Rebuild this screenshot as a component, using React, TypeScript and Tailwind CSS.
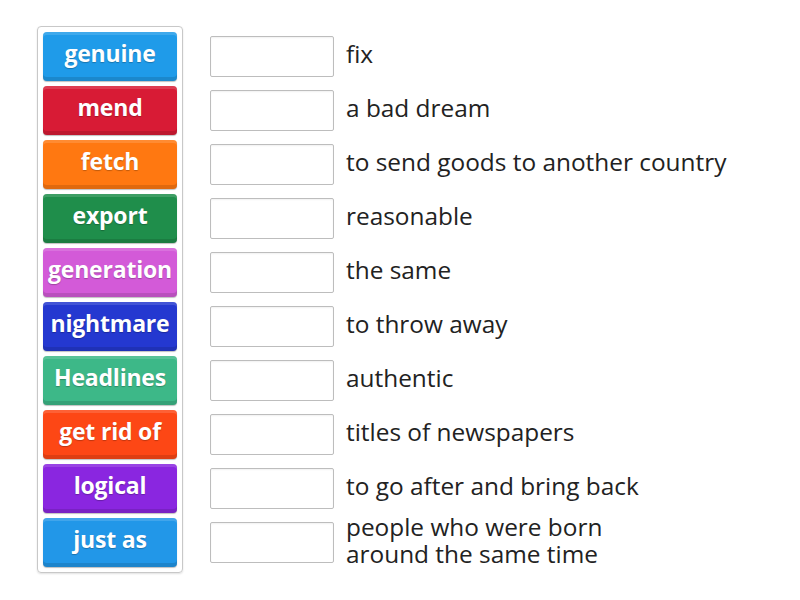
const tiles = [
    { word: "genuine", cls: "bg-[#1f9be9]" },
    { word: "mend", cls: "bg-[#d81b35]" },
    { word: "fetch", cls: "bg-[#ff7811]" },
    { word: "export", cls: "bg-[#1f8e4b]" },
    { word: "generation", cls: "bg-[#d35ad8]" },
    { word: "nightmare", cls: "bg-[#2438d0]" },
    { word: "Headlines", cls: "bg-[#3db888]" },
    { word: "get rid of", cls: "bg-[#fd4715]" },
    { word: "logical", cls: "bg-[#8a26e0]" },
    { word: "just as", cls: "bg-[#2297e8]" },
];

const definitions = [
    ["fix"],
    ["a bad dream"],
    ["to send goods to another country"],
    ["reasonable"],
    ["the same"],
    ["to throw away"],
    ["authentic"],
    ["titles of newspapers"],
    ["to go after and bring back"],
    ["people who were born", "around the same time"],
];

const App = () => {
    return (
        <div className="w-[800px] h-[600px] bg-white flex items-start gap-[27px] pt-[26px] pl-[37px] font-['Open_Sans',sans-serif]">
            <div className="w-[146px] border border-[#c8c8c8] rounded-[4px] p-[5px] flex flex-col gap-[5px] shadow-[0_1px_2px_rgba(0,0,0,0.12)]">
                {tiles.map((t) => (
                    <div
                        key={t.word}
                        className={`${t.cls} h-[49px] rounded-[4px] flex items-center justify-center text-white font-bold text-[23px] leading-none tracking-[-0.2px] whitespace-nowrap shadow-[inset_0_-4px_0_rgba(0,0,0,0.12),inset_0_3px_0_rgba(255,255,255,0.14),0_1px_1px_rgba(0,0,0,0.25)] [text-shadow:0_1px_1px_rgba(0,0,0,0.25)] pb-[6px]`}
                    >
                        {t.word}
                    </div>
                ))}
            </div>

            <div className="flex flex-col gap-[5px] mt-[6px]">
                {definitions.map((d) => (
                    <div key={d[0]} className="h-[49px] flex items-center gap-[12px]">
                        <div className="w-[124px] h-[41px] shrink-0 bg-white border border-[#bdbdbd] rounded-[2px] shadow-[inset_0_1px_2px_rgba(0,0,0,0.06)]" />
                        <p className="text-[24.4px] leading-[27px] text-[#222] whitespace-nowrap mb-[6px]">
                            {d[0]}
                            {d[1] && (
                                <>
                                    <br />
                                    {d[1]}
                                </>
                            )}
                        </p>
                    </div>
                ))}
            </div>
        </div>
    );
};

export default App;
